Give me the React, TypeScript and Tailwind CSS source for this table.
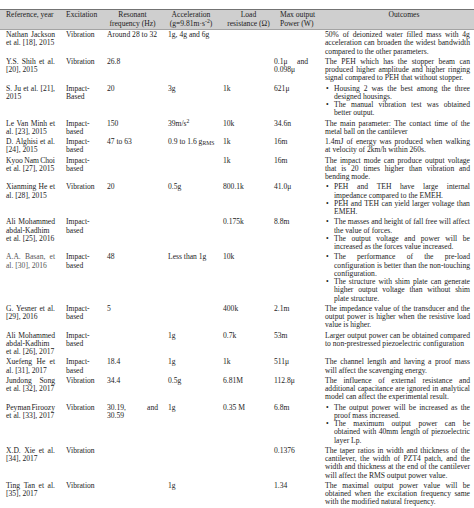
import React from "react";

// column grid shared by the header and every body row
const COLS = "grid grid-cols-[62px_43px_60px_55px_50px_52px_1fr]";

type Row = {
  ref: string[];
  exc: string[];
  res?: string[];
  acc?: React.ReactNode;
  load?: string;
  max?: string[];
  out?: string[];
  bullets?: string[][];
  muted?: boolean;
};

const IMPACT = ["Impact-", "based"];

const rows: Row[] = [
  {
    ref: ["Nathan Jackson", "et al. [18], 2015"],
    exc: ["Vibration"],
    res: ["Around 28 to 32"],
    acc: "1g, 4g and 6g",
    out: [
      "50% of deionized water filled mass with 4g",
      "acceleration can broaden the widest bandwidth",
      "compared to the other parameters.",
    ],
  },
  {
    ref: ["Y.S. Shih et al.", "[20], 2015"],
    exc: ["Vibration"],
    res: ["26.8"],
    max: ["0.1μ and", "0.098μ"],
    out: [
      "The PEH which has the stopper beam can",
      "produced higher amplitude and higher ringing",
      "signal compared to PEH that without stopper.",
    ],
  },
  {
    ref: ["S. Ju et al. [21],", "2015"],
    exc: ["Impact-", "Based"],
    res: ["20"],
    acc: "3g",
    load: "1k",
    max: ["621μ"],
    bullets: [
      ["Housing 2 was the best among the three", "designed housings."],
      ["The manual vibration test was obtained", "better output."],
    ],
  },
  {
    ref: ["Le Van Minh et", "al. [23], 2015"],
    exc: IMPACT,
    res: ["150"],
    acc: (
      <>
        39m/s<sup>2</sup>
      </>
    ),
    load: "10k",
    max: ["34.6n"],
    out: ["The main parameter: The contact time of the", "metal ball on the cantilever"],
  },
  {
    ref: ["D. Alghisi et al.", "[24], 2015"],
    exc: IMPACT,
    res: ["47 to 63"],
    acc: (
      <>
        0.9 to 1.6 g<sub>RMS</sub>
      </>
    ),
    load: "1k",
    max: ["16m"],
    out: ["1.4mJ of energy was produced when walking", "at velocity of 2km/h within 260s."],
  },
  {
    ref: ["Kyoo Nam Choi", "et al. [27], 2015"],
    exc: IMPACT,
    load: "1k",
    max: ["16m"],
    out: [
      "The impact mode can produce output voltage",
      "that is 20 times higher than vibration and",
      "bending mode.",
    ],
  },
  {
    ref: ["Xianming He et", "al. [28], 2015"],
    exc: ["Vibration"],
    res: ["20"],
    acc: "0.5g",
    load: "800.1k",
    max: ["41.0μ"],
    bullets: [
      ["PEH and TEH have large internal", "impedance compared to the EMEH."],
      ["PEH and TEH can yield larger voltage than", "EMEH."],
    ],
  },
  {
    ref: ["Ali Mohammed", "abdal-Kadhim", "et al. [25], 2016"],
    exc: IMPACT,
    load: "0.175k",
    max: ["8.8m"],
    bullets: [
      ["The masses and height of fall free will affect", "the value of forces."],
      ["The output voltage and power will be", "increased as the forces value increased."],
    ],
  },
  {
    ref: ["A.A. Basan, et", "al. [30], 2016"],
    muted: true,
    exc: IMPACT,
    res: ["48"],
    acc: "Less than 1g",
    load: "10k",
    bullets: [
      ["The performance of the pre-load", "configuration is better than the non-touching", "configuration."],
      ["The structure with shim plate can generate", "higher output voltage than without shim", "plate structure."],
    ],
  },
  {
    ref: ["G. Yesner et al.", "[29], 2016"],
    exc: IMPACT,
    res: ["5"],
    load: "400k",
    max: ["2.1m"],
    out: [
      "The impedance value of the transducer and the",
      "output power is higher when the resistive load",
      "value is higher.",
    ],
  },
  {
    ref: ["Ali Mohammed", "abdal-Kadhim", "et al. [26], 2017"],
    exc: IMPACT,
    acc: "1g",
    load: "0.7k",
    max: ["53m"],
    out: ["Larger output power can be obtained compared", "to non-prestressed piezoelectric configuration"],
  },
  {
    ref: ["Xuefeng He et", "al. [31], 2017"],
    exc: IMPACT,
    res: ["18.4"],
    acc: "1g",
    load: "1k",
    max: ["511μ"],
    out: ["The channel length and having a proof mass", "will affect the scavenging energy."],
  },
  {
    ref: ["Jundong Song", "et al. [32], 2017"],
    exc: ["Vibration"],
    res: ["34.4"],
    acc: "0.5g",
    load: "6.81M",
    max: ["112.8μ"],
    out: [
      "The influence of external resistance and",
      "additional capacitance are ignored in analytical",
      "model can affect the experimental result.",
    ],
  },
  {
    ref: ["Peyman Firoozy", "et al. [33], 2017"],
    exc: ["Vibration"],
    res: ["30.19, and", "30.59"],
    acc: "1g",
    load: "0.35 M",
    max: ["6.8m"],
    bullets: [
      ["The output power will be increased as the", "proof mass increased."],
      ["The maximum output power can be", "obtained with 40mm length of piezoelectric", "layer Lp."],
    ],
  },
  {
    ref: ["X.D. Xie et al.", "[34], 2017"],
    exc: ["Vibration"],
    max: ["0.1376"],
    out: [
      "The taper ratios in width and thickness of the",
      "cantilever, the width of PZT4 patch, and the",
      "width and thickness at the end of the cantilever",
      "will affect the RMS output power value.",
    ],
  },
  {
    ref: ["Ting Tan et al.", "[35], 2017"],
    exc: ["Vibration"],
    acc: "1g",
    max: ["1.34"],
    out: [
      "The maximal output power value will be",
      "obtained when the excitation frequency same",
      "with the modified natural frequency.",
    ],
  },
];

// a justified line: words spread edge to edge
const JLine = ({ text }: { text: string }) => (
  <div className="flex justify-between whitespace-nowrap">
    {text.split(" ").map((w, i) => (
      <span key={i}>{w}</span>
    ))}
  </div>
);

// every line but the last one is justified, like the source table
const Lines = ({ lines }: { lines: string[] }) => (
  <>
    {lines.map((l, i) =>
      i < lines.length - 1 ? (
        <JLine key={i} text={l} />
      ) : (
        <div key={i} className="whitespace-nowrap">
          {l}
        </div>
      )
    )}
  </>
);

const BodyRow = ({ row }: { row: Row }) => (
  <div className={`${COLS} py-[1px]`}>
    <div className={`pl-[6px] pr-[7px] ${row.muted ? "text-[#555]" : ""}`}>
      <Lines lines={row.ref} />
    </div>
    <div className="pl-[4px]">
      <Lines lines={row.exc} />
    </div>
    <div className="pl-[2px] pr-[7px]">{row.res && <Lines lines={row.res} />}</div>
    <div className="pl-[3px] whitespace-nowrap">{row.acc}</div>
    <div className="pl-[3px] whitespace-nowrap">{row.load}</div>
    <div className="pl-[4px] pr-[14px]">{row.max && <Lines lines={row.max} />}</div>
    <div className="pl-[3px] pr-[4px]">
      {row.out && <Lines lines={row.out} />}
      {row.bullets &&
        row.bullets.map((b, i) => (
          <div key={i} className="flex">
            <span className="w-[9px] shrink-0 pl-[1px] text-[7.5px]">•</span>
            <div className="flex-1">
              <Lines lines={b} />
            </div>
          </div>
        ))}
    </div>
  </div>
);

export default function App() {
  return (
    <div className="w-[474px] h-[508px] overflow-hidden bg-white pt-[9px] text-[#1c1c1c] text-[7.6px] leading-[8.25px] font-['Liberation_Serif','Times_New_Roman',serif]">
      <div
        className={`${COLS} bg-[#cfcfcf] border-t border-b border-t-[#737373] border-b-[#a3a3a3] leading-[9px] pb-[1px]`}
      >
        <div className="pl-[6px]">Reference, year</div>
        <div className="pl-[4px]">Excitation</div>
        <div className="pl-[2px] pr-[7px] text-center">
          Resonant
          <br />
          frequency (Hz)
        </div>
        <div className="pl-[3px] pr-[6px] text-center whitespace-nowrap">
          Acceleration
          <br />
          (g=9.81m·s<sup>-2</sup>)
        </div>
        <div className="pl-[7px] text-center whitespace-nowrap">
          Load
          <br />
          resistance (Ω)
        </div>
        <div className="pl-[10px] whitespace-nowrap">
          Max output
          <br />
          Power (W)
        </div>
        <div className="pl-[12px] text-center">Outcomes</div>
      </div>
      {rows.map((r, i) => (
        <BodyRow key={i} row={r} />
      ))}
    </div>
  );
}
